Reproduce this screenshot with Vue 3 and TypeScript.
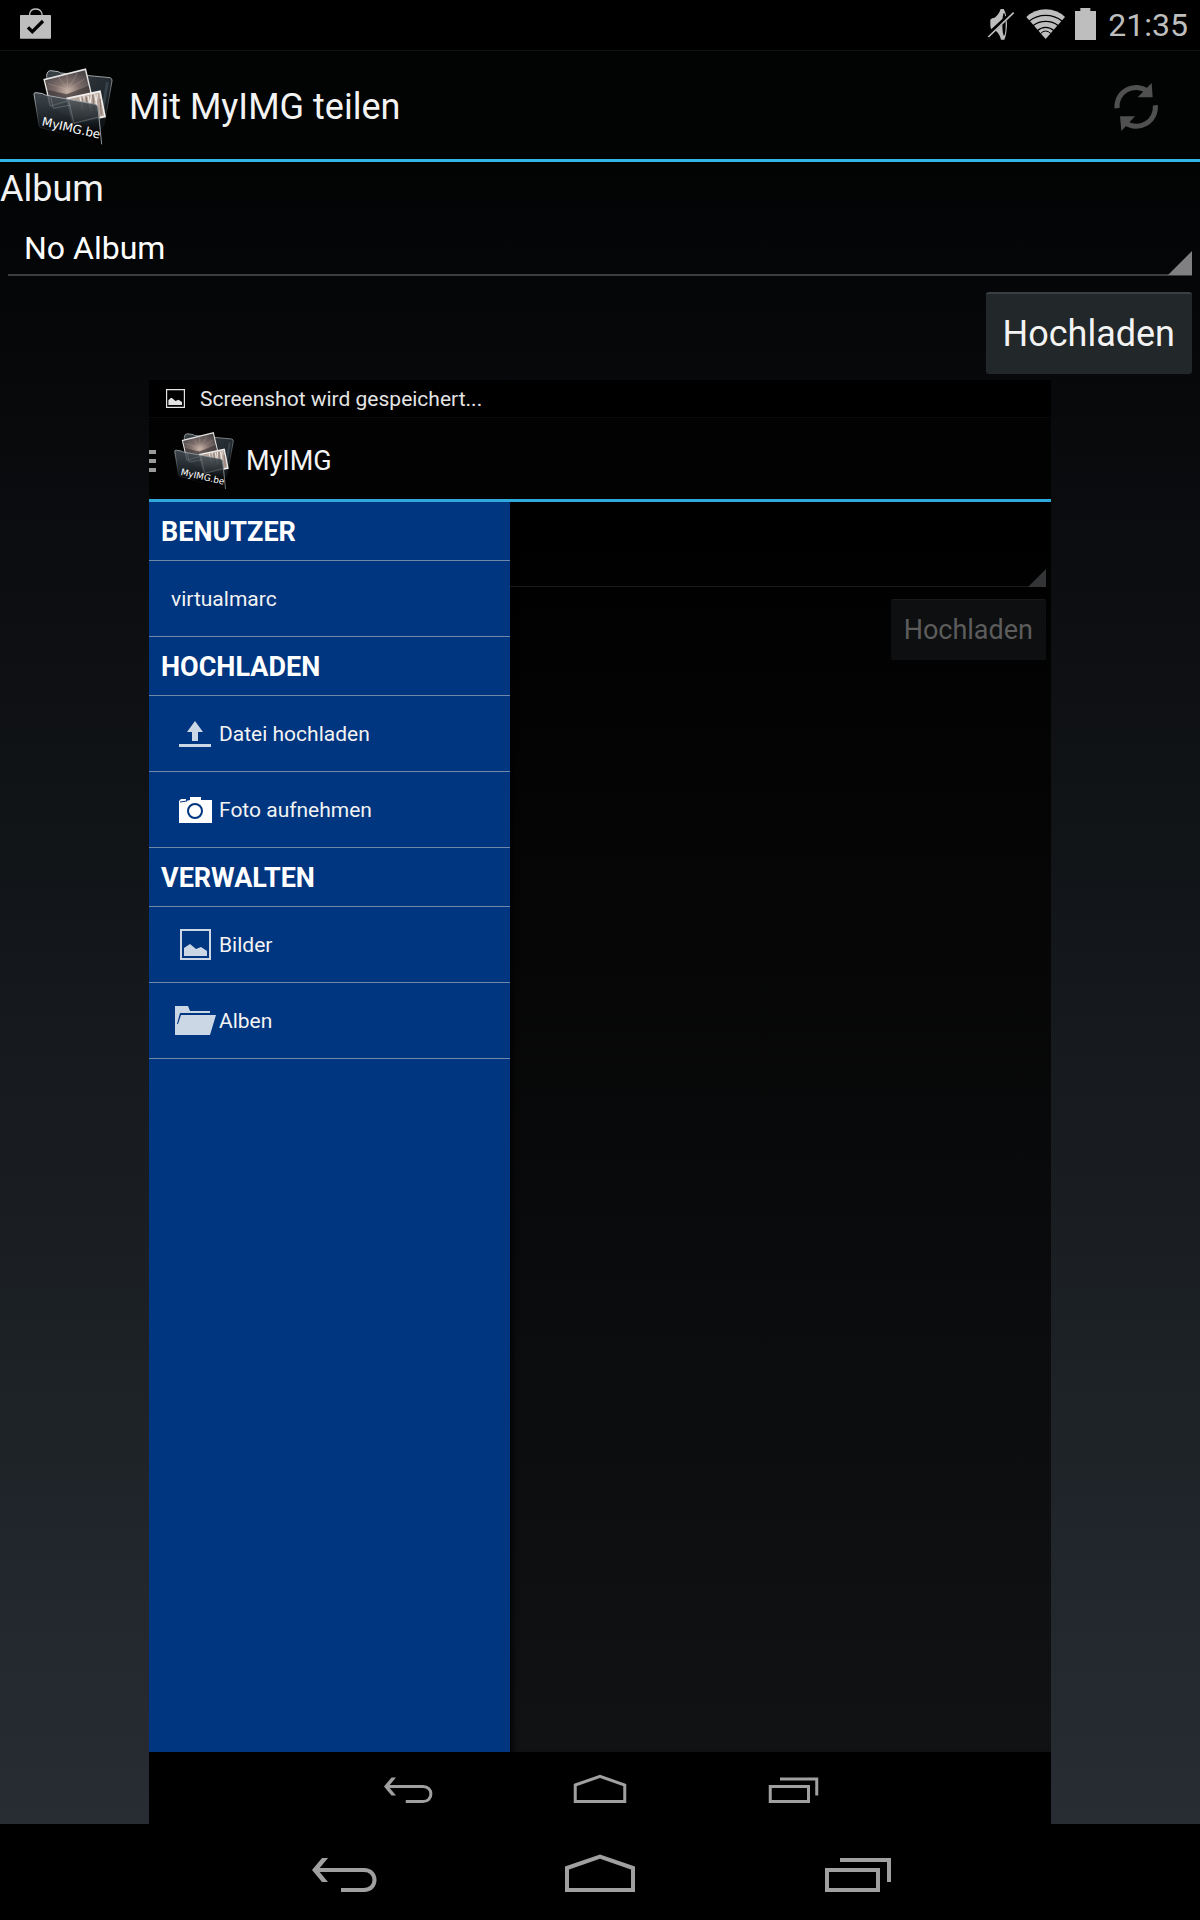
<script setup lang="ts">
import { defineComponent, h, ref } from 'vue'

type IconName = 'upload' | 'camera' | 'picture' | 'folder'

interface MenuItem {
  label: string
  icon?: IconName
}

interface MenuGroup {
  title: string
  items: MenuItem[]
}

const groups: MenuGroup[] = [
  { title: 'BENUTZER', items: [{ label: 'virtualmarc' }] },
  {
    title: 'HOCHLADEN',
    items: [
      { label: 'Datei hochladen', icon: 'upload' },
      { label: 'Foto aufnehmen', icon: 'camera' },
    ],
  },
  {
    title: 'VERWALTEN',
    items: [
      { label: 'Bilder', icon: 'picture' },
      { label: 'Alben', icon: 'folder' },
    ],
  },
]

const album = ref('No Album')

const navIcons = [
  { label: 'Zurück', line: 'M12 22H60C74 22 74 42 60 42H37', fill: 'M8 22L18 10H24L14 22L24 34H18Z' },
  { label: 'Startseite', line: 'M7 20L40 8.5L73 20V42H7Z', fill: '' },
  { label: 'Letzte Apps', line: 'M11 22H62V42H11ZM24 12H73V34', fill: '' },
]

// System navigation keys, shared by the device and the previewed picture
const NavKeys = defineComponent({
  setup() {
    return () =>
      navIcons.map((icon) =>
        h('button', { type: 'button', 'aria-label': icon.label }, [
          h('svg', { viewBox: '0 0 80 48' }, [
            h('path', { d: icon.line, fill: 'none', stroke: '#a0a0a0', 'stroke-width': 4 }),
            h('path', { d: icon.fill || 'M0 0', fill: '#a0a0a0' }),
          ]),
        ]),
      )
  },
})
</script>

<template>
  <div class="screen">
    <svg class="defs" aria-hidden="true">
      <defs>
        <linearGradient id="glassBack" x1="0" y1="0" x2="1" y2="1">
          <stop offset="0" stop-color="#3a4248" />
          <stop offset="0.6" stop-color="#222a30" />
          <stop offset="1" stop-color="#050607" />
        </linearGradient>
        <linearGradient id="glassFront" x1="0" y1="0" x2="0" y2="1">
          <stop offset="0" stop-color="#4c565d" stop-opacity="0.8" />
          <stop offset="0.5" stop-color="#20272c" stop-opacity="0.92" />
          <stop offset="0.8" stop-color="#000000" />
        </linearGradient>
        <linearGradient id="edge" x1="0" y1="0" x2="0" y2="1">
          <stop offset="0" stop-color="#b4bcc0" />
          <stop offset="0.7" stop-color="#50585c" stop-opacity="0.3" />
          <stop offset="1" stop-color="#000000" stop-opacity="0" />
        </linearGradient>
        <radialGradient id="sunset" cx="0.5" cy="0.6" r="0.6">
          <stop offset="0" stop-color="#c9b4a8" />
          <stop offset="0.45" stop-color="#80706c" />
          <stop offset="1" stop-color="#4c484a" />
        </radialGradient>
      </defs>
      <symbol id="logo" viewBox="36 36 246 240">
        <path d="M80 60Q82 47 92 47L115 50L122 54L270 68Q277 70 276 78L252 214L236 232L86 150Z" fill="url(#glassBack)" stroke="url(#edge)" stroke-width="3" />
        <path d="M262 82L244 190" stroke="#4a5c68" stroke-width="8" opacity="0.5" />
        <path d="M70 72L198 40L216 118L90 156Z" fill="#e8e6e4" />
        <path d="M75 76L195 46L211 114L93 150Z" fill="url(#sunset)" />
        <path d="M82 104L140 118L206 92L211 116L93 150Z" fill="#3a3435" opacity="0.65" />
        <path d="M144 104L112 62M144 104L140 56M144 104L172 54M144 104L194 72M144 104L84 86" stroke="#c7b5ad" stroke-width="3" opacity="0.3" />
        <path d="M138 128L242 106L258 187L156 208Z" fill="#efecea" />
        <path d="M146 132L238 113L252 182L160 202Z" fill="#b5a49a" />
        <path d="M180 126l8 38M192 122l-2 34M204 122l8 46M214 119l-5 38M224 117l10 52M232 117l-5 36" stroke="#eee7e2" stroke-width="4" />
        <path d="M198 126l8 42M218 120l6 54M188 130l4 24M240 132l4 46" stroke="#66554f" stroke-width="2" />
        <path d="M42 118Q42 112 49 113L68 116L76 120L226 148Q233 150 234 158L245 268L62 218Q58 216 57 212Z" fill="url(#glassFront)" stroke="url(#edge)" stroke-width="3" />
        <path d="M92 124L100 160L152 150M146 136L162 205L236 186" fill="none" stroke="#98a2a6" stroke-width="2" opacity="0.6" />
        <path d="M234 158L245 268" stroke="#8d9599" stroke-width="3" />
      </symbol>
      <symbol id="frame" viewBox="0 0 32 32">
        <path d="M1 1H31V31H1Z" fill="none" stroke="currentColor" stroke-width="2" />
        <path d="M4 27V19L8 15L10 15L16 20L21 18L27 22V27Z" fill="currentColor" />
      </symbol>
    </svg>

    <header class="status">
      <svg class="bag" viewBox="60 21 96 96">
        <path d="M89 45V38Q92 24 107 24T126 38V45" fill="none" stroke="#bebebe" stroke-width="4" />
        <path d="M62 42H151Q153 42 153 44V111Q153 113 151 113H62Q60 113 60 111V44Q60 42 62 42Z" fill="#bebebe" />
        <path d="M84 79L97 92L129 60" fill="none" stroke="#000" stroke-width="10" />
      </svg>
      <div class="indicators">
        <svg class="mute" viewBox="78 27 84 96">
          <path d="M88 62Q92 56 101 56Q113 48 119 30H128Q137 44 138 76Q137 108 130 122H120Q115 104 106 97Q88 95 88 80Z" fill="#bebebe" />
          <ellipse cx="129" cy="76" rx="5" ry="34" fill="#000" />
          <path d="M78 111L156 38" stroke="#000" stroke-width="12" />
          <path d="M82 114L158 41" stroke="#bebebe" stroke-width="5" />
        </svg>
        <svg class="wifi" viewBox="195 27 126 90">
          <path d="M202 51Q226 28 260 28T318 51L260 117Z" fill="#bebebe" />
          <path d="M211 63Q232 46 260 46T309 63M222 77Q239 64 260 64T298 77M235 92Q246 82 260 82T285 92" fill="none" stroke="#000" stroke-width="4" />
          <path d="M244 101Q252 93 260 93T276 101" fill="none" stroke="#000" stroke-width="3" />
        </svg>
        <svg class="battery" viewBox="345 24 63 96">
          <path d="M361 24H391V33H408V120H345V33H361Z" fill="#bebebe" />
        </svg>
        <time>21:35</time>
      </div>
    </header>

    <div class="appbar">
      <svg class="logo" viewBox="36 36 246 240">
        <use href="#logo" x="36" y="36" width="246" height="240" />
        <text x="64" y="211" transform="rotate(13 64 211)" class="logo-text">MyIMG.be</text>
      </svg>
      <h1>Mit MyIMG teilen</h1>
      <button type="button" class="refresh" aria-label="Aktualisieren">
        <svg viewBox="456 248 144 144">
          <path d="M471 324A57 57 0 0 1 562 273M586 315A57 57 0 0 1 496 367" fill="none" stroke="#505050" stroke-width="15" />
          <path d="M575 248L578 291H533ZM480 348H525L484 392Z" fill="#505050" />
        </svg>
      </button>
    </div>

    <main>
      <label for="album">Album</label>
      <div class="spinner">
        <select id="album" v-model="album">
          <option>No Album</option>
        </select>
      </div>
      <button type="button" class="upload">Hochladen</button>

      <section class="preview">
        <div class="p-status">
          <svg class="p-note"><use href="#frame" /></svg>
          <span>Screenshot wird gespeichert...</span>
        </div>
        <div class="p-appbar">
          <span class="burger"><i /><i /><i /></span>
          <svg class="p-logo" viewBox="36 36 246 240">
            <use href="#logo" x="36" y="36" width="246" height="240" />
            <text x="64" y="211" transform="rotate(13 64 211)" class="logo-text">MyIMG.be</text>
          </svg>
          <h2>MyIMG</h2>
        </div>
        <div class="p-body">
          <nav class="drawer">
            <template v-for="group in groups" :key="group.title">
              <h3>{{ group.title }}</h3>
              <a v-for="item in group.items" :key="item.label" href="#">
                <svg v-if="item.icon" viewBox="-2 0 46 36">
                  <g v-if="item.icon === 'upload'" fill="#ccd7e6">
                    <path d="M22 5L30 16H25V25H19V16H14Z" />
                    <path d="M6 28H38V31H6Z" />
                  </g>
                  <g v-else-if="item.icon === 'camera'">
                    <path d="M6 9L8 7H13V9L17 8V5H28V8H39V31H6Z" fill="#fff" />
                    <path d="M7 10L14 9" stroke="#003580" />
                    <circle cx="22" cy="19" r="7" fill="none" stroke="#003580" stroke-width="2" />
                  </g>
                  <g v-else-if="item.icon === 'picture'">
                    <path d="M8 3H37V32H8Z" fill="none" stroke="#ccd7e6" stroke-width="2" />
                    <path d="M11 29V21L17 17L23 22L28 20L34 24V29Z" fill="#ccd7e6" />
                  </g>
                  <g v-else fill="#ccd7e6">
                    <path d="M2 3H15L17 8H37V10H7L4 21H5L8 12H43L37 32H2Z" />
                  </g>
                </svg>
                <span>{{ item.label }}</span>
              </a>
            </template>
          </nav>
          <div class="p-content">
            <div class="p-spinner" />
            <button type="button" class="p-upload" disabled>Hochladen</button>
          </div>
        </div>
        <div class="p-keys"><NavKeys /></div>
      </section>
    </main>

    <footer class="keys"><NavKeys /></footer>
  </div>
</template>

<style>
body {
  margin: 0;
  background: #000;
}
</style>

<style scoped>
.screen {
  display: flex;
  flex-direction: column;
  min-height: 100vh;
  background: #000;
  color: #f3f3f3;
  font-family: Roboto, sans-serif;
}
.screen * {
  box-sizing: border-box;
}
svg {
  display: block;
  flex: none;
}
.defs {
  position: absolute;
  width: 0;
  height: 0;
}
.logo-text {
  font: 36px "DejaVu Sans", sans-serif;
  fill: #fff;
}
button {
  padding: 0;
  border: 0;
  background: none;
  font-family: inherit;
}
h1,
h2,
h3 {
  margin: 0;
  font-weight: 400;
}

.status {
  display: flex;
  align-items: center;
  justify-content: space-between;
  height: 51px;
  padding: 0 12px 2px 20px;
  border-bottom: 1px solid #121212;
}
.bag {
  width: 32px;
  height: 32px;
}
.indicators {
  display: flex;
  align-items: center;
  gap: 9px;
  color: #bebebe;
  font-size: 32px;
}
.indicators time {
  padding: 2px 0 0 3px;
  line-height: 46px;
}
.mute {
  width: 28px;
  height: 32px;
}
.wifi {
  width: 42px;
  height: 30px;
}
.battery {
  width: 21px;
  height: 32px;
}

.appbar {
  display: flex;
  align-items: center;
  height: 111px;
  padding: 4px 40px 0 32px;
  background: #020303;
  border-bottom: 3px solid #33b5e5;
}
.logo {
  width: 82px;
  height: 80px;
}
h1 {
  flex: 1;
  padding-left: 15px;
  font-size: 36px;
  line-height: 48px;
}
.refresh svg {
  width: 48px;
  height: 48px;
}

main {
  display: flex;
  flex: 1;
  flex-direction: column;
  background: linear-gradient(#020303, #07080a 12%, #272d33);
}
label {
  font-size: 36px;
  line-height: 54px;
}
.spinner {
  position: relative;
  margin: 0 8px;
  border-bottom: 2px solid #3c3d3f;
}
.spinner::after,
.p-spinner::after {
  content: "";
  position: absolute;
  right: 0;
  bottom: -1px;
  width: 24px;
  height: 24px;
  background: #808082;
  clip-path: polygon(100% 0, 100% 100%, 0 100%);
}
select {
  display: block;
  width: 100%;
  height: 58px;
  padding: 6px 16px 0;
  border: 0;
  appearance: none;
  background: none;
  color: #fff;
  font-family: inherit;
  font-size: 32px;
}
.upload {
  align-self: flex-end;
  height: 82px;
  margin: 16px 8px 6px;
  padding: 0 17px;
  border-top: 2px solid #3a3f43;
  border-radius: 3px;
  background: #22272a;
  color: #f3f3f3;
  font-size: 36px;
}

.preview {
  display: flex;
  flex: 1;
  flex-direction: column;
  align-self: center;
  width: 100%;
  max-width: 902px;
  background: #000;
}
.p-status {
  display: flex;
  align-items: center;
  gap: 15px;
  height: 38px;
  padding-left: 17px;
  border-bottom: 1px solid #0a0a0a;
  color: #e4e4e4;
  font-size: 21px;
}
.p-note {
  width: 19px;
  height: 19px;
}
.p-appbar {
  display: flex;
  align-items: center;
  height: 84px;
  padding-top: 4px;
  background: #020202;
  border-bottom: 3px solid #2fa9dc;
}
.burger {
  display: grid;
  gap: 5px;
  width: 24px;
}
.burger i {
  width: 7px;
  height: 4px;
  background: #999;
}
.p-logo {
  width: 62px;
  height: 60px;
}
h2 {
  padding-left: 11px;
  font-size: 27px;
}
.p-body {
  display: flex;
  flex: 1;
}
.drawer {
  display: flex;
  flex: 0 0 40%;
  flex-direction: column;
  background: #003580;
}
h3 {
  height: 59px;
  padding-left: 12px;
  border-bottom: 1px solid #7088a8;
  color: #fff;
  font-size: 27px;
  font-weight: 700;
  line-height: 61px;
}
.drawer a {
  display: flex;
  align-items: center;
  gap: 2px;
  height: 76px;
  padding-left: 22px;
  border-bottom: 1px solid #7088a8;
  color: #f3f3f3;
  font-size: 21px;
  text-decoration: none;
}
.drawer svg {
  width: 46px;
  height: 36px;
}
.p-content {
  display: flex;
  flex: 1;
  flex-direction: column;
  padding: 0 5px 0 6px;
  background: linear-gradient(#000, #111214);
  box-shadow: inset 6px 0 6px -4px #000;
}
.p-spinner {
  position: relative;
  height: 85px;
  margin-left: -6px;
  border-bottom: 1px solid #1a1b1c;
}
.p-spinner::after {
  width: 18px;
  height: 18px;
  background: #333436;
}
.p-upload {
  align-self: flex-end;
  height: 61px;
  margin-top: 12px;
  padding: 0 13px;
  border-top: 1px solid #17191b;
  border-radius: 2px;
  background: #0e0f11;
  color: #5c5c5c;
  font-size: 27px;
}

.p-keys,
.keys {
  display: flex;
  justify-content: center;
  background: #000;
}
.p-keys {
  height: 72px;
}
.keys {
  height: 96px;
}
.keys :deep(button) {
  width: 256px;
}
.p-keys :deep(button) {
  width: 192px;
}
.keys :deep(button),
.p-keys :deep(button) {
  display: flex;
  align-items: center;
  justify-content: center;
  padding: 0;
  border: 0;
  background: none;
}
.keys :deep(svg) {
  width: 80px;
  height: 48px;
}
.p-keys :deep(svg) {
  width: 60px;
  height: 36px;
}
</style>
